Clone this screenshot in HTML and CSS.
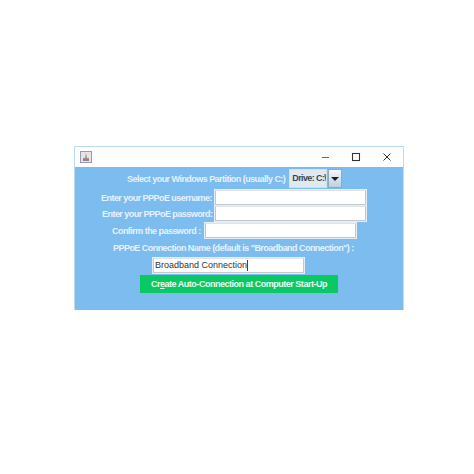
FILE: index.html
```html
<!DOCTYPE html>
<html lang="en">
<head>
<meta charset="utf-8">
<title>PPPoE Auto-Connection</title>
<link rel="stylesheet" href="styles.css">
</head>
<body>
<div class="window">
  <div class="titlebar">
    <svg class="app-icon" width="12" height="12" viewBox="0 0 12 12"><rect x="0.5" y="0.5" width="11" height="11" fill="#e4e4ea" stroke="#9a9aa8"/><path d="M6 2 L7 7 H9 V10 H3 V7 H5 Z" fill="#b08a80"/><path d="M3 9 H9" stroke="#6f7f9f"/></svg>
    <div class="controls">
      <svg width="10" height="10" viewBox="0 0 10 10"><path d="M2 5.5 H9" stroke="#666" stroke-width="1"/></svg>
      <svg width="10" height="10" viewBox="0 0 10 10"><rect x="1.5" y="1.5" width="7" height="7" fill="none" stroke="#333" stroke-width="1.1"/></svg>
      <svg width="10" height="10" viewBox="0 0 10 10"><path d="M1.5 1.5 L8.5 8.5 M8.5 1.5 L1.5 8.5" stroke="#333" stroke-width="1"/></svg>
    </div>
  </div>
  <div class="content">
    <div class="row row-partition">
      <span class="label">Select your Windows Partition (usually C:)</span>
      <div class="combo"><span class="combo-value">Drive: C:\</span><span class="combo-arrow"><i class="arrow"></i></span></div>
    </div>
    <div class="row row-user">
      <span class="label">Enter your PPPoE username:</span>
      <input class="field field-wide" type="text">
    </div>
    <div class="row row-pass">
      <span class="label">Enter your PPPoE password:</span>
      <input class="field field-wide" type="password">
    </div>
    <div class="row row-confirm">
      <span class="label">Confirm the password :</span>
      <input class="field field-wide" type="password">
    </div>
    <div class="row row-name">
      <span class="label">PPPoE Connection Name (default is "Broadband Connection") :</span>
    </div>
    <div class="row row-conn">
      <div class="field field-conn"><span class="caret-text">Broadband Connection</span></div>
    </div>
    <div class="row row-btn">
      <button class="create" type="button">Cr<u>e</u>ate Auto-Connection at Computer Start-Up</button>
    </div>
  </div>
</div>
</body>
</html>
```
FILE: styles.css
```css
html, body {
  margin: 0;
  padding: 0;
  background: #fff;
  height: 474px;
  overflow: hidden;
}
body {
  padding: 146px 0 0 74px;
  box-sizing: border-box;
  font-family: "Liberation Sans", Arial, sans-serif;
}
.window {
  width: 330px;
  height: 164px;
  box-sizing: border-box;
  border: 1px solid #b9dcf3;
  border-bottom: 0;
  background: #7cbcee;
  display: flex;
  flex-direction: column;
}
.titlebar {
  height: 20px;
  background: #fff;
  display: flex;
  align-items: center;
  justify-content: space-between;
  padding: 0 11px 0 5px;
  flex: none;
}
.app-icon { display: block; }
.controls {
  display: flex;
  align-items: center;
  gap: 21px;
}
.controls svg { display: block; }
.content {
  display: flex;
  flex-direction: column;
  padding-top: 2px;
}
.row {
  display: flex;
  align-items: center;
}
.label {
  font-size: 9px;
  letter-spacing: -0.54px;
  font-weight: 700;
  color: #e6f2fc;
  white-space: nowrap;
}
.row-partition { height: 19px; padding-left: 52px; gap: 4px; margin-bottom: 2px; }
.row-user { height: 15px; padding-left: 26px; gap: 3px; margin-bottom: 1px; }
.row-pass { height: 15px; padding-left: 27px; gap: 2px; margin-bottom: 2px; }
.row-confirm { height: 15px; padding-left: 37px; gap: 4px; margin-bottom: 3px; }
.row-name { height: 14px; padding-left: 38px; margin-bottom: 3px; }
.row-conn { height: 15px; padding-left: 78px; margin-bottom: 2px; }
.row-btn { padding-left: 65px; }
.combo {
  display: flex;
  width: 53px;
  height: 19px;
  box-sizing: border-box;
}
.combo-value {
  width: 38px;
  background: #dfe9f3;
  border: 1px solid #cfe0ee;
  box-sizing: border-box;
  font-size: 9px;
  letter-spacing: -0.6px;
  font-weight: 700;
  color: #3c4650;
  line-height: 17px;
  padding-left: 2px;
  white-space: nowrap;
  overflow: hidden;
}
.combo-arrow {
  margin-left: 1px;
  width: 14px;
  background: linear-gradient(#f4f7fa, #bcd0e2);
  border: 1px solid #8fa9c0;
  box-sizing: border-box;
  display: flex;
  align-items: center;
  justify-content: center;
}
.arrow {
  width: 0;
  height: 0;
  border-left: 4px solid transparent;
  border-right: 4px solid transparent;
  border-top: 4px solid #222;
}
.field {
  display: block;
  box-sizing: border-box;
  height: 15px;
  margin: 0;
  background: #fff;
  border: 1px solid #c4c8cc;
  border-top-color: #dfe3e6;
  outline: 1px solid #e5eef5;
  outline-offset: 0;
  padding: 0 0 0 1px;
  border-radius: 0;
  font-family: "Liberation Sans", Arial, sans-serif;
  font-size: 9px;
  line-height: 13px;
  color: #333;
  white-space: nowrap;
}
.field-wide { width: 151px; }
.field-conn { width: 151px; }
.caret-text {
  display: inline-block;
  height: 11px;
  line-height: 11px;
  border-right: 1px solid #444;
}
.create {
  width: 198px;
  height: 18px;
  margin: 0;
  padding: 0;
  border: 0;
  background: #0ac864;
  color: #e9fbf1;
  font-family: "Liberation Sans", Arial, sans-serif;
  font-size: 9px;
  letter-spacing: -0.48px;
  font-weight: 700;
  white-space: nowrap;
}
```
